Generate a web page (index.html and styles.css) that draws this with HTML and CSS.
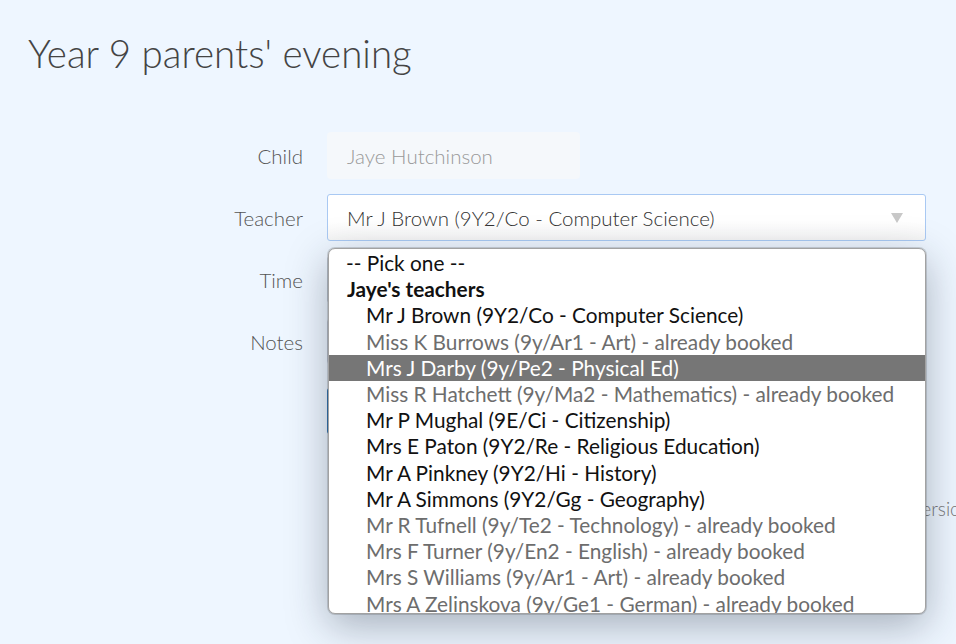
FILE: index.html
```html
<!DOCTYPE html>
<html lang="en">
<head>
<meta charset="utf-8">
<title>Year 9 parents' evening</title>
<link rel="stylesheet" href="styles.css">
</head>
<body>
<main class="page">
  <h1 class="title">Year 9 parents' evening</h1>
  <form class="form">
    <label class="label">Child</label>
    <div class="field"><div class="input readonly">Jaye Hutchinson</div></div>

    <label class="label">Teacher</label>
    <div class="field">
      <div class="select">
        <span class="select-text">Mr J Brown (9Y2/Co - Computer Science)</span>
        <span class="select-arrow"></span>
      </div>
      <ul class="listbox">
        <li class="opt top">-- Pick one --</li>
        <li class="group">Jaye's teachers</li>
        <li class="opt">Mr J Brown (9Y2/Co - Computer Science)</li>
        <li class="opt disabled">Miss K Burrows (9y/Ar1 - Art) - already booked</li>
        <li class="opt active">Mrs J Darby (9y/Pe2 - Physical Ed)</li>
        <li class="opt disabled">Miss R Hatchett (9y/Ma2 - Mathematics) - already booked</li>
        <li class="opt">Mr P Mughal (9E/Ci - Citizenship)</li>
        <li class="opt">Mrs E Paton (9Y2/Re - Religious Education)</li>
        <li class="opt">Mr A Pinkney (9Y2/Hi - History)</li>
        <li class="opt">Mr A Simmons (9Y2/Gg - Geography)</li>
        <li class="opt disabled">Mr R Tufnell (9y/Te2 - Technology) - already booked</li>
        <li class="opt disabled">Mrs F Turner (9y/En2 - English) - already booked</li>
        <li class="opt disabled">Mrs S Williams (9y/Ar1 - Art) - already booked</li>
        <li class="opt disabled">Mrs A Zelinskova (9y/Ge1 - German) - already booked</li>
      </ul>
    </div>

    <label class="label">Time</label>
    <div class="field"><div class="select wide"></div></div>

    <label class="label">Notes</label>
    <div class="field"><div class="input wide"></div></div>

    <div></div>
    <div class="field actions"><button type="button" class="btn" aria-label="Book appointment"></button></div>

    <div></div>
    <p class="note">version</p>
  </form>
</main>
</body>
</html>
```

FILE: styles.css
```css
html, body {
  margin: 0;
  padding: 0;
}
body {
  background: #eef6ff;
  font-family: Lato, "Open Sans", sans-serif;
  color: #444;
  width: 956px;
  height: 644px;
  overflow: hidden;
}
.page {
  padding: 0 0 0 28px;
}
.title {
  margin: 0;
  padding-top: 29px;
  font-size: 38.5px;
  line-height: 48px;
  font-weight: 300;
  color: #444;
}
.form {
  display: grid;
  grid-template-columns: 275px 599px;
  grid-auto-rows: auto;
  column-gap: 24px;
  row-gap: 15px;
  margin-top: 55px;
}
.label {
  box-sizing: border-box;
  height: 47px;
  padding-top: 1px;
  text-align: right;
  font-size: 20.5px;
  line-height: 46px;
  color: #555;
  font-weight: 300;
}
.field {
  position: relative;
  height: 47px;
}
.input {
  box-sizing: border-box;
  height: 47px;
  border-radius: 4px;
  padding: 0 20px;
  font-size: 20.5px;
  font-weight: 300;
  line-height: 48px;
}
.readonly {
  width: 253px;
  background: #f5f8fb;
  color: #999;
}
.input.wide {
  width: 599px;
  background: #fff;
  border: 1px solid #cfd8e3;
}
.select {
  box-sizing: border-box;
  height: 47px;
  width: 599px;
  border: 1px solid #a9c9f3;
  border-radius: 3px;
  background: linear-gradient(#ffffff 60%, #f6f6f6);
  display: flex;
  align-items: center;
  justify-content: space-between;
  padding: 0 22px 0 19px;
}
.select.wide {
  border-color: #cfd8e3;
}
.select-text {
  font-size: 20.5px;
  font-weight: 300;
  color: #333;
  padding-top: 1px;
}
.select-arrow {
  width: 0;
  height: 0;
  border-left: 6px solid transparent;
  border-right: 6px solid transparent;
  border-top: 10px solid #c8c8c8;
}
.listbox {
  position: absolute;
  z-index: 5;
  left: 1px;
  top: 54px;
  box-sizing: border-box;
  width: 598px;
  height: 366px;
  margin: 0;
  padding: 1px 0 0;
  list-style: none;
  background: #fff;
  border: 1px solid #a2a2a2;
  border-radius: 7px;
  box-shadow: 0 0 0 1px rgba(0,0,0,0.14), 0 12px 40px rgba(30,40,60,0.34);
  overflow: hidden;
  font-size: 20.8px;
  line-height: 26.2px;
  color: #111;
}
.listbox li {
  white-space: nowrap;
  padding-left: 37px;
}
.listbox .top {
  padding-left: 17px;
}
.listbox .group {
  font-weight: 700;
  padding-left: 18px;
  color: #111;
}
.listbox .disabled {
  color: #6d6d6d;
}
.listbox .active {
  background: #767676;
  color: #fff;
}
.actions {
  margin-top: 8px;
  height: 46px;
}
.btn {
  display: block;
  width: 200px;
  height: 46px;
  border: 0;
  border-radius: 3px;
  background: #3a82c4;
}
.note {
  margin: 48px 0 0 585px;
  font-size: 19px;
  font-weight: 300;
  line-height: 24px;
  color: #777;
  white-space: nowrap;
}
```
